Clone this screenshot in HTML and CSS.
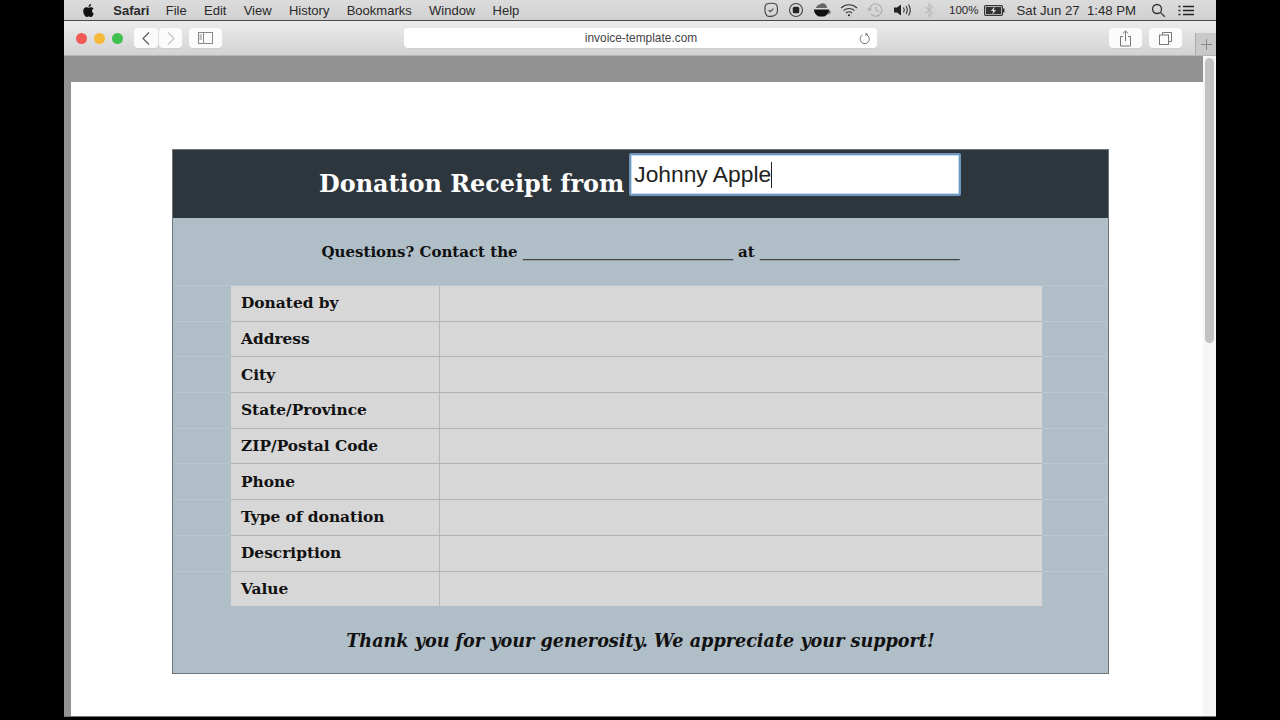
FILE: index.html
```html
<!DOCTYPE html>
<html lang="en">
<head>
    <meta charset="UTF-8">
    <title>Donation Receipt | invoice-template.com</title>
    <link rel="stylesheet" href="styles.css">
</head>
<body>

    <div class="screen">

        <!-- Mac menu bar -->
        <div class="menubar">
            <svg class="apple-logo" width="13" height="15" viewBox="0 0 24 24"><path fill="#111" d="M12.152 6.896c-.948 0-2.415-1.078-3.96-1.04-2.04.027-3.91 1.183-4.961 3.014-2.117 3.675-.546 9.103 1.519 12.09 1.013 1.454 2.208 3.09 3.792 3.039 1.52-.065 2.09-.987 3.935-.987 1.831 0 2.35.987 3.96.948 1.637-.026 2.676-1.48 3.676-2.948 1.156-1.688 1.636-3.325 1.662-3.415-.039-.013-3.182-1.221-3.22-4.857-.026-3.04 2.48-4.494 2.597-4.559-1.429-2.09-3.623-2.324-4.39-2.376-2-.156-3.675 1.09-4.61 1.09zM15.53 3.83c.843-1.012 1.4-2.427 1.245-3.83-1.207.052-2.662.805-3.532 1.818-.78.896-1.454 2.338-1.273 3.714 1.338.104 2.715-.688 3.559-1.701"/></svg>
            <span class="menu-app">Safari</span>
            <span>File</span>
            <span>Edit</span>
            <span>View</span>
            <span>History</span>
            <span>Bookmarks</span>
            <span>Window</span>
            <span>Help</span>

            <div class="menu-status">
                <svg width="16" height="16" viewBox="0 0 16 16" fill="none" stroke="#444" stroke-width="1.1"><path d="M3.2 2.2C6 1 11 1 13 2.2c1.7 1.5 2 7 .7 9.5-1.4 2.3-6.5 3.4-9.2 2.2C1.700 12.500 1 5 3.200 2.200z"/><path d="M5.600 8.200l1.700 1.500 3-3"/></svg>
                <svg width="16" height="16" viewBox="0 0 16 16"><circle cx="8" cy="8" r="6.500" fill="none" stroke="#444" stroke-width="1.100"/><rect x="4.800" y="4.800" width="6.400" height="6.400" rx="1.500" fill="#222"/></svg>
                <svg width="18" height="16" viewBox="0 0 18 16"><path fill="#111" d="M1 7.500h15c0 4-3 6.500-5 7H6c-2-.5-5-3-5-7z"/><path fill="#666" d="M3 6c0-2 2-3 5.500-4.500S14 4 14 6z"/><path fill="#222" d="M15 8.500h2.500v2.500l-2.500 1.500z" opacity=".6"/></svg>
                <svg width="18" height="14" viewBox="0 0 18 14" fill="none" stroke="#333" stroke-width="1.100"><path d="M1 5c4.500-4.300 11.500-4.300 16 0"/><path d="M3.500 7.600c3-2.800 8-2.800 11 0"/><path d="M6 10c1.700-1.400 4.300-1.400 6 0"/><circle cx="9" cy="12.300" r="1" fill="#222" stroke="none"/></svg>
                <svg width="17" height="16" viewBox="0 0 17 16" fill="none" stroke="#aaa" stroke-width="1.100"><path d="M2.500 8a6.200 6.200 0 1 1 1.900 4.500"/><path d="M.8 6.500l1.700 2 1.900-1.800"/><path d="M9 4.500V8l2.500 1.700"/></svg>
                <svg width="20" height="14" viewBox="0 0 20 14"><path fill="#222" d="M1 4.500h3L8 1.500v11l-4-3H1z"/><g fill="none" stroke="#333" stroke-width="1.100"><path d="M10.500 4.500c1 1.500 1 3.500 0 5"/><path d="M13 3c1.600 2.500 1.600 5.500 0 8"/><path d="M15.500 1.500c2.300 3.500 2.300 7.500 0 11"/></g></svg>
                <svg class="bt-icon" width="10" height="16" viewBox="0 0 10 16" fill="none" stroke="#bbb" stroke-width="1.100"><path d="M1.500 4.500l7 6.500-3.500 3.500V1.500L8.500 5l-7 6.500"/></svg>
                <span class="battery-pct">100%</span>
                <svg class="battery" width="21" height="11" viewBox="0 0 21 11"><rect x=".6" y=".6" width="17.800" height="9.800" rx="1.200" fill="none" stroke="#333" stroke-width="1.200"/><rect x="2" y="2" width="15" height="7" fill="#333"/><rect x="19" y="3.500" width="1.500" height="4" fill="#333"/><path fill="#ddd" d="M10.800 1.500L6.800 6h2.400l-1 3.500 4-4.500h-2.400z"/></svg>
                <span class="clock">Sat Jun 27&nbsp; 1:48 PM</span>
                <svg class="search-icon" width="15" height="15" viewBox="0 0 15 15" fill="none" stroke="#333" stroke-width="1.300"><circle cx="6" cy="6" r="4.500"/><path d="M9.400 9.400l4.400 4.400"/></svg>
                <svg width="16" height="11" viewBox="0 0 16 11" fill="none" stroke="#222" stroke-width="1.300"><path d="M.500 1.500h2M5 1.500h11M.500 5.500h2M5 5.500h11M.500 9.500h2M5 9.500h11"/></svg>
            </div>
        </div>

        <!-- Safari toolbar -->
        <div class="toolbar">
            <div class="traffic-lights">
                <span class="light light-red"></span>
                <span class="light light-yellow"></span>
                <span class="light light-green"></span>
            </div>
            <div class="tool-btn nav-back">
                <svg width="10" height="15" viewBox="0 0 10 15" fill="none" stroke="#555" stroke-width="1.100"><path d="M8 1.500L2 7.500l6 6"/></svg>
            </div>
            <div class="tool-btn nav-forward">
                <svg width="10" height="15" viewBox="0 0 10 15" fill="none" stroke="#c4c4c4" stroke-width="1.100"><path d="M2 1.500l6 6-6 6"/></svg>
            </div>
            <div class="tool-btn sidebar-btn">
                <svg width="15" height="12" viewBox="0 0 15 12" fill="none" stroke="#888" stroke-width="1"><rect x=".5" y=".5" width="14" height="11"/><path d="M5.500 .5v11M1.500 3h2.500M1.500 5h2.500M1.500 7h2.500" /></svg>
            </div>
            <div class="url-field">
                <span class="url-text">invoice-template.com</span>
                <svg class="reload-icon" width="12" height="13" viewBox="0 0 12 13" fill="none" stroke="#777" stroke-width="1"><path d="M7.500 2.800a4.600 4.600 0 1 1-4 .2"/><path d="M6.500 .5v3.500l2.500-1.700z" fill="#777" stroke="none"/></svg>
            </div>
            <div class="tool-btn share-btn">
                <svg width="13" height="17" viewBox="0 0 13 17" fill="none" stroke="#777" stroke-width="1"><path d="M4 6.500H1.500v9.500h10V6.500H9"/><path d="M6.500 11V1M3.800 3.500L6.500 1l2.700 2.500"/></svg>
            </div>
            <div class="tool-btn tabs-btn">
                <svg width="13" height="13" viewBox="0 0 13 13" fill="none" stroke="#777" stroke-width="1"><rect x=".5" y="3" width="9" height="9.500"/><path d="M3.500 3V.5h9V9.500H9.500"/></svg>
            </div>
            <div class="new-tab">
                <svg width="11" height="11" viewBox="0 0 11 11" stroke="#888" stroke-width="1"><path d="M5.500 0v11M0 5.500h11"/></svg>
            </div>
        </div>

        <div class="viewport">
            <div class="doc-area">
                <div class="page">

                    <div class="receipt">
                        <div class="receipt-head">
                            <h1>Donation Receipt from</h1>
                            <div class="name-input">Johnny Apple<span class="caret"></span></div>
                        </div>

                        <p class="contact-line">Questions? Contact the <span class="blank">____________________</span> at <span class="blank">___________________</span></p>

                        <div class="row"><div class="cell-label">Donated by</div><div class="cell-value"></div></div>
                        <div class="row"><div class="cell-label">Address</div><div class="cell-value"></div></div>
                        <div class="row"><div class="cell-label">City</div><div class="cell-value"></div></div>
                        <div class="row"><div class="cell-label">State/Province</div><div class="cell-value"></div></div>
                        <div class="row"><div class="cell-label">ZIP/Postal Code</div><div class="cell-value"></div></div>
                        <div class="row"><div class="cell-label">Phone</div><div class="cell-value"></div></div>
                        <div class="row"><div class="cell-label">Type of donation</div><div class="cell-value"></div></div>
                        <div class="row"><div class="cell-label">Description</div><div class="cell-value"></div></div>
                        <div class="row"><div class="cell-label">Value</div><div class="cell-value"></div></div>

                        <p class="thanks">Thank you for your generosity. We appreciate your support!</p>
                    </div>

                </div>
            </div>
            <div class="scrollbar"><div class="scroll-thumb"></div></div>
        </div>

    </div>

</body>
</html>
```

FILE: styles.css
```css
body {
    margin: 0;
    padding: 0;
    height: 720px;
    background-color: #000;
    overflow: hidden;
    font-family: "Liberation Sans", Arial, sans-serif;
}

.screen {
    width: 1152px;
    height: 716px;
    margin: 0 auto;
    display: flex;
    flex-direction: column;
    background-color: #fff;
    border-bottom: 1px solid #777;
}

/* Menu bar */
.menubar {
    height: 20px;
    flex: none;
    display: flex;
    align-items: center;
    gap: 17.3px;
    padding: 0 22px 0 18px;
    background: linear-gradient(#dcdcdc, #d0d0d0);
    border-bottom: 1px solid #4a4a4a;
    font-size: 13px;
    color: #2a2a2a;
}

.apple-logo {
    margin-right: 1px;
}

.menu-app {
    font-weight: bold;
    margin-right: -1px;
}

.menu-status {
    margin-left: auto;
    display: flex;
    align-items: center;
    gap: 9px;
    font-size: 13.2px;
}

.bt-icon {
    margin: 0 2px;
}

.battery-pct {
    font-size: 11.5px;
    margin-left: 4px;
}

.battery {
    margin-left: -4px;
}

.clock {
    margin-left: 3px;
}

.search-icon {
    margin: 0 3px 0 6px;
}

/* Safari toolbar */
.toolbar {
    height: 34px;
    flex: none;
    display: flex;
    align-items: center;
    padding-left: 12px;
    background: linear-gradient(#ececec, #d2d2d2);
    border-bottom: 1px solid #b5b5b5;
}

.traffic-lights {
    display: flex;
    gap: 7px;
    margin-right: 11px;
}

.light {
    width: 11px;
    height: 11px;
    border-radius: 50%;
}

.light-red {
    background-color: #f25a55;
}

.light-yellow {
    background-color: #f6b93b;
}

.light-green {
    background-color: #3fc04f;
}

.tool-btn {
    height: 20px;
    display: flex;
    align-items: center;
    justify-content: center;
    background-color: #fbfbfb;
    border-radius: 4px;
    box-shadow: 0 1px 0 #cdcdcd;
}

.nav-back {
    width: 24px;
    margin-right: 1px;
}

.nav-forward {
    width: 23px;
    margin-right: 7px;
}

.sidebar-btn {
    width: 33px;
}

.url-field {
    width: 473px;
    height: 20px;
    margin-left: 182px;
    display: flex;
    align-items: center;
    padding-right: 6px;
    box-sizing: border-box;
    background-color: #fff;
    border-radius: 4px;
    box-shadow: 0 1px 0 #cdcdcd;
}

.url-text {
    flex: 1;
    text-align: center;
    padding-left: 19px;
    font-size: 11.9px;
    color: #444;
}

.share-btn {
    width: 33px;
    margin-left: auto;
    margin-right: 7px;
}

.tabs-btn {
    width: 33px;
    margin-right: 13px;
}

.new-tab {
    width: 21px;
    height: 22px;
    align-self: flex-end;
    display: flex;
    align-items: center;
    justify-content: center;
    background-color: #c9c9c9;
    border-left: 1px solid #aaa;
    box-sizing: border-box;
}

/* Browser content */
.viewport {
    flex: 1;
    min-height: 0;
    display: flex;
}

.doc-area {
    flex: 1;
    padding: 26px 0 0 7px;
    background-color: #929292;
}

.page {
    height: 100%;
    padding-top: 67px;
    box-sizing: border-box;
    background-color: #fff;
}

.scrollbar {
    width: 13px;
    padding: 2px 2px 0;
    box-sizing: border-box;
    background-color: #f6f6f6;
}

.scroll-thumb {
    height: 285px;
    border-radius: 5px;
    background-color: #c2c2c2;
}

/* Receipt */
.receipt {
    width: 937px;
    height: 525px;
    margin-left: 101px;
    box-sizing: border-box;
    border: 1px solid #6f7679;
    background-color: #b0bec7;
    font-family: "DejaVu Serif", Georgia, serif;
    font-weight: bold;
    color: #111;
}

.receipt-head {
    height: 68px;
    display: flex;
    align-items: center;
    padding: 0 0 0 146px;
    gap: 5px;
    background-color: #2e363d;
}

.receipt-head h1 {
    margin: 0;
    font-size: 23.9px;
    color: #fff;
    white-space: nowrap;
}

.name-input {
    flex: none;
    width: 332px;
    height: 43px;
    margin-bottom: 19px;
    display: flex;
    align-items: center;
    padding-left: 3px;
    box-sizing: border-box;
    background-color: #fff;
    border: 2px solid #6f97bd;
    border-radius: 2px;
    box-shadow: inset 0 0 0 1px #c5dbee;
    font-family: "Liberation Sans", Arial, sans-serif;
    font-weight: normal;
    font-size: 22.8px;
    color: #222;
}

.caret {
    width: 1px;
    height: 26px;
    background-color: #222;
}

.contact-line {
    height: 67px;
    margin: 0;
    line-height: 65px;
    text-align: center;
    font-size: 15px;
    white-space: nowrap;
}

.blank {
    font-family: "Liberation Serif", serif;
    font-weight: normal;
    font-size: 21px;
    color: #444;
}

.row {
    height: 35.7px;
    display: flex;
    padding: 0 66px 0 58px;
    box-sizing: border-box;
    border-top: 1px solid #b9c6ce;
}

.cell-label {
    width: 209px;
    padding-left: 10px;
    display: flex;
    align-items: center;
    box-sizing: border-box;
    background-color: #d7d7d7;
    border-right: 1px solid #b8b8b8;
    font-size: 15.4px;
}

.cell-value {
    flex: 1;
    background-color: #d7d7d7;
}

.row + .row .cell-label,
.row + .row .cell-value {
    box-shadow: 0 -1px 0 #b3b3b3;
}

.thanks {
    height: 68px;
    margin: 0;
    display: flex;
    align-items: center;
    justify-content: center;
    font-size: 17.6px;
    font-style: italic;
}
```
